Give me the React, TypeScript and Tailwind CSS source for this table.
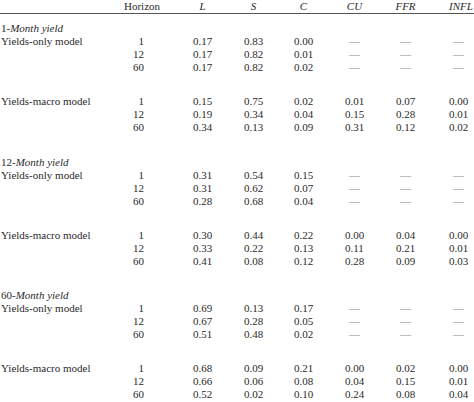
const cols = "grid grid-cols-[120px_24px_49px_51px_50px_51px_51px_53px_1fr]";

type Row = [string, string, string, string, string, string, string];

const sections: { n: string; only: Row[]; macro: Row[] }[] = [
  {
    n: "1",
    only: [
      ["1", "0.17", "0.83", "0.00", "—", "—", "—"],
      ["12", "0.17", "0.82", "0.01", "—", "—", "—"],
      ["60", "0.17", "0.82", "0.02", "—", "—", "—"],
    ],
    macro: [
      ["1", "0.15", "0.75", "0.02", "0.01", "0.07", "0.00"],
      ["12", "0.19", "0.34", "0.04", "0.15", "0.28", "0.01"],
      ["60", "0.34", "0.13", "0.09", "0.31", "0.12", "0.02"],
    ],
  },
  {
    n: "12",
    only: [
      ["1", "0.31", "0.54", "0.15", "—", "—", "—"],
      ["12", "0.31", "0.62", "0.07", "—", "—", "—"],
      ["60", "0.28", "0.68", "0.04", "—", "—", "—"],
    ],
    macro: [
      ["1", "0.30", "0.44", "0.22", "0.00", "0.04", "0.00"],
      ["12", "0.33", "0.22", "0.13", "0.11", "0.21", "0.01"],
      ["60", "0.41", "0.08", "0.12", "0.28", "0.09", "0.03"],
    ],
  },
  {
    n: "60",
    only: [
      ["1", "0.69", "0.13", "0.17", "—", "—", "—"],
      ["12", "0.67", "0.28", "0.05", "—", "—", "—"],
      ["60", "0.51", "0.48", "0.02", "—", "—", "—"],
    ],
    macro: [
      ["1", "0.68", "0.09", "0.21", "0.00", "0.02", "0.00"],
      ["12", "0.66", "0.06", "0.08", "0.04", "0.15", "0.01"],
      ["60", "0.52", "0.02", "0.10", "0.24", "0.08", "0.04"],
    ],
  },
];

function DataRow({ label, row }: { label?: string; row: Row }) {
  return (
    <div className={`${cols} h-[13px] leading-[13px]`}>
      <div className="pl-px whitespace-nowrap">{label}</div>
      <div className="text-right">{row[0]}</div>
      <div />
      {row.slice(1).map((v, i) => (
        <div key={i} className="whitespace-nowrap">
          {v === "—" ? <span className="inline-block w-[19px] text-center text-[#8a8a8a]">—</span> : v}
        </div>
      ))}
    </div>
  );
}

export default function App() {
  return (
    <div
      className="w-[474px] h-[402px] overflow-hidden bg-white text-[11px] text-[#2a2a2a]"
      style={{ fontFamily: '"Liberation Serif", "Times New Roman", serif' }}
    >
      <div className={`${cols} h-[14px] leading-[13px] border-b border-[#555]`}>
        <div />
        <div className="col-span-2 pl-[4px]">Horizon</div>
        <div className="w-[19px] text-center italic">L</div>
        <div className="w-[19px] text-center italic">S</div>
        <div className="w-[19px] text-center italic">C</div>
        <div className="w-[19px] text-center italic whitespace-nowrap">CU</div>
        <div className="w-[19px] flex justify-center italic">FFR</div>
        <div className="italic whitespace-nowrap">INFL</div>
      </div>
      <div className="flex flex-col pt-[8px] gap-[21.3px]">
        {sections.map((s) => (
          <div key={s.n} className="flex flex-col gap-[21.3px]">
            <div className="flex flex-col">
              <div className="h-[13px] leading-[13px] pl-px whitespace-nowrap">
                {s.n}-<span className="italic">Month yield</span>
              </div>
              {s.only.map((r, i) => (
                <DataRow key={i} label={i === 0 ? "Yields-only model" : undefined} row={r} />
              ))}
            </div>
            <div className="flex flex-col">
              {s.macro.map((r, i) => (
                <DataRow key={i} label={i === 0 ? "Yields-macro model" : undefined} row={r} />
              ))}
            </div>
          </div>
        ))}
      </div>
    </div>
  );
}
